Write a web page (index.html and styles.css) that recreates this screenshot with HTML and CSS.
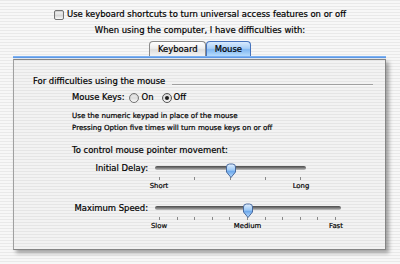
FILE: index.html
```html
<!DOCTYPE html>
<html>
<head>
<meta charset="utf-8">
<link rel="stylesheet" href="styles.css">
</head>
<body>
<div class="window">
  <label class="top-check"><span class="checkbox"></span><span>Use keyboard shortcuts to turn universal access features on or off</span></label>
  <div class="subtitle">When using the computer, I have difficulties with:</div>
  <div class="tabview">
    <div class="tabs">
      <div class="tab">Keyboard</div>
      <div class="tab active">Mouse</div>
    </div>
    <div class="strip"></div>
    <div class="panel">
      <div class="group-head"><span>For difficulties using the mouse</span><span class="rule"></span></div>
      <div class="indent">
        <div class="radio-row">
          <span class="radio-label">Mouse Keys:</span>
          <span class="radio"></span><span class="opt">On</span>
          <span class="radio checked"></span><span class="opt">Off</span>
        </div>
        <p class="note first">Use the numeric keypad in place of the mouse</p>
        <p class="note">Pressing Option five times will turn mouse keys on or off</p>
        <div class="section-title">To control mouse pointer movement:</div>
        <div class="slider-row delay">
          <div class="slider-label">Initial Delay:</div>
          <div class="slider short">
            <div class="track-area">
              <div class="track"></div>
              <svg class="thumb" style="--v:0.5" width="12" height="16" viewBox="0 0 12 16">
                <defs>
                  <linearGradient id="tg1" x1="0" y1="0" x2="0" y2="1">
                    <stop offset="0" stop-color="#e3f0fe"/>
                    <stop offset="0.45" stop-color="#9cc8f5"/>
                    <stop offset="0.55" stop-color="#6ea9ec"/>
                    <stop offset="1" stop-color="#b9dcfc"/>
                  </linearGradient>
                </defs>
                <path d="M1.5 4 Q1.5 1 4.5 1 H7.5 Q10.5 1 10.5 4 V9 L6 14.5 L1.5 9 Z" fill="url(#tg1)" stroke="#3d5f95" stroke-width="0.9"/>
              </svg>
            </div>
            <div class="ticks"><i></i><i></i><i></i><i></i><i></i></div>
            <div class="marks"><span>Short</span><span>Long</span></div>
          </div>
        </div>
        <div class="slider-row speed">
          <div class="slider-label">Maximum Speed:</div>
          <div class="slider long">
            <div class="track-area">
              <div class="track"></div>
              <svg class="thumb" style="--v:0.5" width="12" height="16" viewBox="0 0 12 16">
                <defs>
                  <linearGradient id="tg2" x1="0" y1="0" x2="0" y2="1">
                    <stop offset="0" stop-color="#e3f0fe"/>
                    <stop offset="0.45" stop-color="#9cc8f5"/>
                    <stop offset="0.55" stop-color="#6ea9ec"/>
                    <stop offset="1" stop-color="#b9dcfc"/>
                  </linearGradient>
                </defs>
                <path d="M1.5 4 Q1.5 1 4.5 1 H7.5 Q10.5 1 10.5 4 V9 L6 14.5 L1.5 9 Z" fill="url(#tg2)" stroke="#3d5f95" stroke-width="0.9"/>
              </svg>
            </div>
            <div class="ticks"><i></i><i></i><i></i><i></i><i></i><i></i><i></i><i></i><i></i><i></i><i></i></div>
            <div class="marks"><span>Slow</span><span>Medium</span><span>Fast</span></div>
          </div>
        </div>
      </div>
    </div>
  </div>
</div>
</body>
</html>
```
FILE: styles.css
```css
* { box-sizing: border-box; }
html, body {
  margin: 0;
  padding: 0;
}
body {
  width: 400px;
  height: 264px;
  overflow: hidden;
  font-family: "DejaVu Sans", "Lucida Grande", sans-serif;
  font-size: 8.45px;
  color: #000;
  -webkit-text-stroke: 0.2px #000;
  background: repeating-linear-gradient(to bottom, #e9e9e9 0 1px, #f7f7f7 1px 3px);
}
.window {
  padding-top: 8px;
  display: flex;
  flex-direction: column;
  align-items: center;
}
.top-check {
  display: flex;
  align-items: center;
  gap: 3px;
  line-height: 13px;
  height: 13px;
}
.checkbox {
  width: 10px;
  height: 10px;
  border: 1px solid #737373;
  border-radius: 2px;
  background: linear-gradient(#f6f6f6, #dedede 50%, #d2d2d2 51%, #fbfbfb);
  box-shadow: inset 0 1px 1px rgba(0,0,0,0.15);
}
.subtitle {
  margin-top: 3px;
  line-height: 13px;
}
.tabview {
  margin-top: 4px;
  width: 373px;
  align-self: flex-start;
  margin-left: 13px;
  display: flex;
  flex-direction: column;
}
.tabs {
  display: flex;
  justify-content: center;
  padding-left: 1px;
  height: 15px;
}
.tab {
  height: 15px;
  line-height: 14px;
  padding: 0 7.5px;
  border: 1px solid #8a8a8a;
  border-bottom: none;
  border-radius: 4px 4px 0 0;
  background: linear-gradient(#ffffff, #eeeeee 45%, #dddddd 55%, #f3f3f3);
}
.tab.active {
  border-color: #4673bd;
  background: linear-gradient(#d9ebfe, #a9cff7 45%, #80b7f1 55%, #b8ddfd);
}
.strip {
  height: 3px;
  background: linear-gradient(#8fbcf3 0, #4b8ee6 2px, #e2e8f0 2px);
}
.panel {
  border-top: 1px solid #858585;
  border-left: 1px solid #a0a0a0;
  border-right: 1px solid #858585;
  border-bottom: 1px solid #858585;
  background: repeating-linear-gradient(to bottom, #e5e5e5 0 1px, #f2f2f2 1px 3px);
  box-shadow: 3px 3px 4px rgba(0,0,0,0.35);
  padding: 15px 12px 19px 19px;
  height: 191px;
}
.group-head {
  display: flex;
  align-items: center;
  line-height: 13px;
  gap: 7px;
}
.rule {
  flex: 1;
  height: 2px;
  margin-top: 7px;
  background: linear-gradient(#a0a0a0 0 1px, #f8f8f8 1px);
}
.indent {
  padding-left: 39px;
}
.radio-row {
  margin-top: 3px;
  display: flex;
  align-items: center;
  line-height: 13px;
}
.radio-label { margin-right: 4px; }
.radio {
  width: 10px;
  height: 10px;
  border-radius: 50%;
  border: 1px solid #737373;
  background: linear-gradient(#f4f4f4, #dcdcdc 50%, #fbfbfb);
  box-shadow: inset 0 1px 1px rgba(0,0,0,0.15);
  display: flex;
  align-items: center;
  justify-content: center;
  margin-right: 3px;
}
.radio.checked::after {
  content: "";
  width: 4px;
  height: 4px;
  border-radius: 50%;
  background: #1c1c1c;
}
.opt { margin-right: 8px; }
.opt:last-child { margin-right: 0; }
.radio.checked { margin-right: 2px; border-color: #555; }
.note {
  margin: 2px 0 0;
  font-size: 7.1px;
  line-height: 10px;
}
.note.first { margin-top: 7px; }
.section-title {
  margin-top: 11px;
  line-height: 13px;
}
.slider-row {
  display: grid;
  grid-template-columns: 76px auto;
  column-gap: 7px;
  margin-top: 5px;
}
.slider-row.speed { margin-top: 11px; }
.slider-label {
  text-align: right;
  line-height: 12px;
  white-space: nowrap;
}
.slider.short { width: 151px; }
.slider.long { width: 186px; }
.track-area {
  position: relative;
  height: 12px;
  padding-top: 4px;
}
.track {
  height: 4px;
  border-radius: 2px;
  background: linear-gradient(#4c4c4c, #7a7a7a 50%, #c4c4c4);
}
.thumb {
  position: absolute;
  top: 1px;
  left: calc(4px + (100% - 9px) * var(--v) - 5.5px);
}
.ticks {
  margin-top: 3px;
  padding: 0 5px 0 4px;
  height: 3px;
  display: flex;
  justify-content: space-between;
}
.ticks i {
  display: block;
  width: 1px;
  height: 3px;
  background: #888;
}
.marks {
  margin: 2px -10px 0 -11px;
  display: flex;
  justify-content: space-between;
  font-size: 6.9px;
  line-height: 9px;
}
.marks span {
  width: 30px;
  text-align: center;
}
```
